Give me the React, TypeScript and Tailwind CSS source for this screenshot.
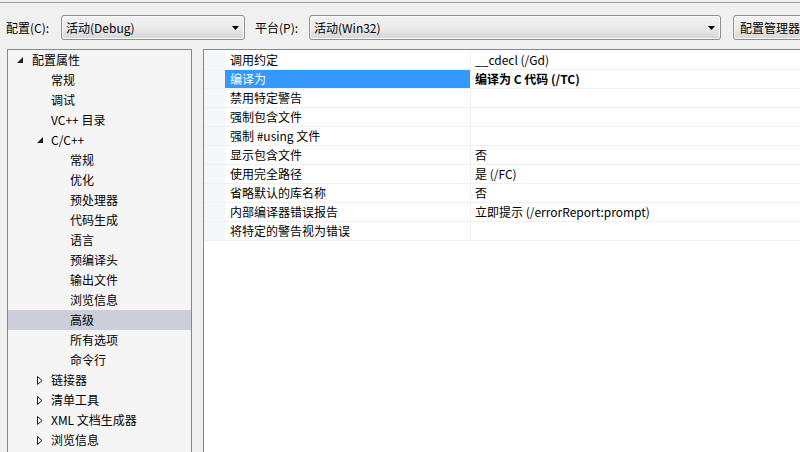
import React from "react";

const FONT = "font-['Noto_Sans_CJK_SC','Noto_Sans',sans-serif]";

type TreeItem = {
  label: string;
  level: number;
  arrow?: "open" | "closed";
  selected?: boolean;
};

const tree: TreeItem[] = [
  { label: "配置属性", level: 0, arrow: "open" },
  { label: "常规", level: 1 },
  { label: "调试", level: 1 },
  { label: "VC++ 目录", level: 1 },
  { label: "C/C++", level: 1, arrow: "open" },
  { label: "常规", level: 2 },
  { label: "优化", level: 2 },
  { label: "预处理器", level: 2 },
  { label: "代码生成", level: 2 },
  { label: "语言", level: 2 },
  { label: "预编译头", level: 2 },
  { label: "输出文件", level: 2 },
  { label: "浏览信息", level: 2 },
  { label: "高级", level: 2, selected: true },
  { label: "所有选项", level: 2 },
  { label: "命令行", level: 2 },
  { label: "链接器", level: 1, arrow: "closed" },
  { label: "清单工具", level: 1, arrow: "closed" },
  { label: "XML 文档生成器", level: 1, arrow: "closed" },
  { label: "浏览信息", level: 1, arrow: "closed" },
];

const props: { name: string; value: string; selected?: boolean }[] = [
  { name: "调用约定", value: "__cdecl (/Gd)" },
  { name: "编译为", value: "编译为 C 代码 (/TC)", selected: true },
  { name: "禁用特定警告", value: "" },
  { name: "强制包含文件", value: "" },
  { name: "强制 #using 文件", value: "" },
  { name: "显示包含文件", value: "否" },
  { name: "使用完全路径", value: "是 (/FC)" },
  { name: "省略默认的库名称", value: "否" },
  { name: "内部编译器错误报告", value: "立即提示 (/errorReport:prompt)" },
  { name: "将特定的警告视为错误", value: "" },
];

const indent = ["pl-[24px]", "pl-[43px]", "pl-[62px]"];
const arrowPos = ["left-[9px]", "left-[29px]", "left-[48px]"];

function Arrow({ kind }: { kind: "open" | "closed" }) {
  if (kind === "open") {
    return (
      <svg width="6" height="6" viewBox="0 0 6 6">
        <polygon points="6,0 6,6 0,6" fill="#1e1e1e" />
      </svg>
    );
  }
  return (
    <svg width="6" height="9" viewBox="0 0 6 9">
      <polygon points="0.5,0.5 5,4.5 0.5,8.5" fill="none" stroke="#1e1e1e" strokeWidth="1" />
    </svg>
  );
}

const btn =
  "h-[25px] shrink-0 flex items-center rounded-[3px] border border-[#8e8f8f] bg-gradient-to-b from-[#f2f2f2] via-[#ebebeb] to-[#d6d6d6] shadow-[inset_0_0_0_1px_#fcfcfc]";

function Combo({ text, width }: { text: string; width: string }) {
  return (
    <div className={`${btn} ${width} justify-between pl-[4px] pr-[5px]`}>
      <span>{text}</span>
      <svg width="7" height="4" viewBox="0 0 7 4">
        <polygon points="0,0 7,0 3.5,4" fill="#000" />
      </svg>
    </div>
  );
}

export default function App() {
  return (
    <div className={`${FONT} text-[12px] text-black bg-[#f0f0f0] w-[800px] h-[452px] overflow-hidden`}>
      <div className="h-[2px]" />
      <div className="border-t border-[#a0a0a0]" />

      {/* Toolbar */}
      <div className="flex items-center h-[25px] mt-[12px] pl-[6px]">
        <span className="w-[55px] shrink-0">配置(C):</span>
        <Combo text="活动(Debug)" width="w-[184px]" />
        <span className="ml-[10px] w-[54px] shrink-0">平台(P):</span>
        <Combo text="活动(Win32)" width="w-[412px]" />
        <div className={`${btn} ml-[12px] w-[80px] pl-[6px] whitespace-nowrap`}>
          配置管理器
        </div>
      </div>

      {/* Panels */}
      <div className="flex mt-[9px] pl-[7px] gap-[11px]">
        {/* Tree */}
        <div className="w-[185px] h-[420px] shrink-0 border border-[#828790] bg-[#f5f5f5]">
          {tree.map((t, i) => (
            <div
              key={i}
              className={`relative h-[20px] flex items-center ${indent[t.level]} ${
                t.selected ? "bg-[#cccedb]" : ""
              }`}
            >
              {t.arrow && (
                <span className={`absolute ${arrowPos[t.level]} top-0 h-[20px] flex items-center`}>
                  <Arrow kind={t.arrow} />
                </span>
              )}
              <span>{t.label}</span>
            </div>
          ))}
        </div>

        {/* Property grid */}
        <div className="flex-1 h-[420px] border-l border-t border-[#828790] bg-white pt-[1px]">
          {props.map((p, i) => (
            <div key={i} className="flex h-[19px] border-b border-[#eef0f4]">
              <div className="w-[21px] shrink-0 bg-[#f5f7fb]" />
              <div
                className={`w-[245px] shrink-0 flex items-center pl-[5px] ${
                  p.selected ? "bg-[#3399ff] text-white" : ""
                }`}
              >
                {p.name}
              </div>
              <div
                className={`flex-1 flex items-center pl-[4px] border-l border-[#eef0f4] whitespace-nowrap ${
                  p.selected ? "font-bold" : ""
                }`}
              >
                {p.value}
              </div>
            </div>
          ))}
        </div>
      </div>
    </div>
  );
}
